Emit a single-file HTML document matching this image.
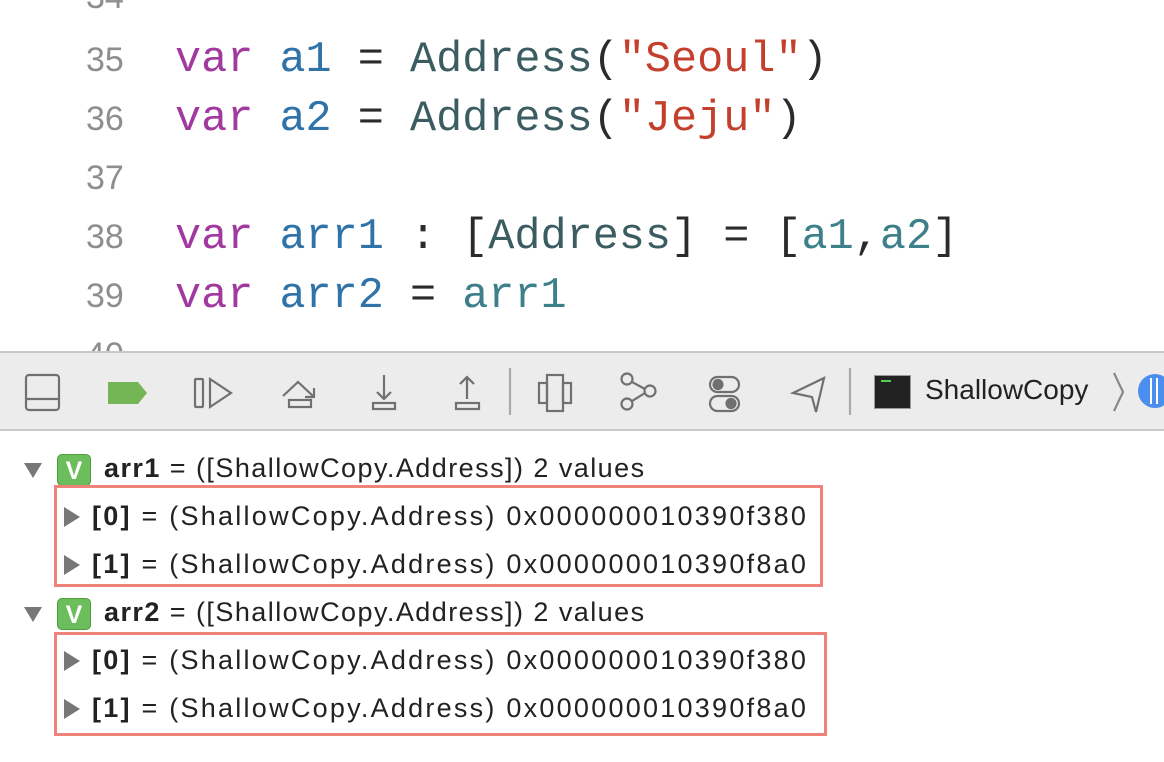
<!DOCTYPE html>
<html><head><style>
body{margin:0;width:1164px;height:762px;background:#fff;overflow:hidden;position:relative;font-family:"Liberation Sans",sans-serif}
.ln{position:absolute;left:86px;font-family:"Liberation Sans",sans-serif;font-size:34px;color:#8e8e8e}
.code{position:absolute;left:175px;font-family:"Liberation Mono",monospace;font-size:43.5px;color:#2b2b2b;white-space:pre}
.k{color:#a1399f}.v{color:#2f73a8}.t{color:#3b5c60}.s{color:#c4402d}.v2{color:#3e8089}
.tb{position:absolute;left:0;top:351px;width:1164px;height:76px;background:#ececec;border-top:2px solid #c8c8c8;border-bottom:2px solid #c8c8c8}
.row{position:absolute;font-size:27px;letter-spacing:1.45px;color:#222;white-space:pre}
.it{letter-spacing:2.25px}
.tri{position:absolute;width:0;height:0}
.box{position:absolute;border:3px solid #ef837c}
.V{position:absolute;left:57px;width:34px;height:32px;background:#6cbd5b;border:1px solid #4e9c40;border-radius:5px;color:#fff;font-weight:bold;font-size:25px;text-align:center;line-height:32px;box-sizing:border-box}
</style></head><body>
<div class="ln" style="top:-22px">34</div>
<div class="ln" style="top:41px">35</div>
<div class="code" style="top:36px"><span class="k">var</span> <span class="v">a1</span> = <span class="t">Address</span>(<span class="s">"Seoul"</span>)</div>
<div class="ln" style="top:100px">36</div>
<div class="code" style="top:95px"><span class="k">var</span> <span class="v">a2</span> = <span class="t">Address</span>(<span class="s">"Jeju"</span>)</div>
<div class="ln" style="top:159px">37</div>
<div class="ln" style="top:218px">38</div>
<div class="code" style="top:213px"><span class="k">var</span> <span class="v">arr1</span> : [<span class="t">Address</span>] = [<span class="v2">a1</span>,<span class="v2">a2</span>]</div>
<div class="ln" style="top:277px">39</div>
<div class="code" style="top:272px"><span class="k">var</span> <span class="v">arr2</span> = <span class="v2">arr1</span></div>
<div class="ln" style="top:336px">40</div>
<div class="tb">
<svg width="1164" height="76" style="position:absolute;left:0;top:0" fill="none" stroke="#707070" stroke-width="2.2">
<rect x="26" y="22" width="33" height="35" rx="3"/><line x1="26" y1="46" x2="59" y2="46"/>
<path d="M108 29h30l9 11-9 11h-30z" fill="#74b655" stroke="none"/>
<rect x="195" y="26" width="8" height="28" rx="1"/><path d="M210 26l21 14-21 14z"/>
<path d="M283 43l15-14 15 14M305 44h9v-9"/><rect x="289" y="47" width="22" height="7"/>
<path d="M384 22v24M377 39l7 7 7-7"/><rect x="373" y="50" width="22" height="6"/>
<path d="M467 24v22M460 31l7-7 7 7"/><rect x="456" y="50" width="23" height="6"/>
<line x1="510" y1="15" x2="510" y2="62" stroke="#aaa"/>
<rect x="547" y="22" width="16" height="36"/><rect x="539" y="30" width="8" height="20"/><rect x="563" y="30" width="8" height="20"/>
<circle cx="627" cy="26" r="5.5"/><circle cx="627" cy="51" r="5.5"/><circle cx="650" cy="38" r="5.5"/><path d="M632 29l13 7M632 48l13-8"/>
<rect x="710" y="24" width="29" height="15" rx="7.5"/><rect x="710" y="43" width="29" height="15" rx="7.5"/><circle cx="718" cy="31.5" r="4.5" fill="#707070"/><circle cx="731" cy="50.5" r="4.5" fill="#707070"/>
<path d="M793 40l31-15-8 34-4-15z"/>
<line x1="850" y1="15" x2="850" y2="62" stroke="#aaa"/>
<path d="M1114 20l9 19-9 19" stroke="#888"/>
</svg>
<div style="position:absolute;left:874px;top:22px;width:37px;height:34px;background:#222;border:1px solid #999;box-sizing:border-box"><div style="margin:4px 0 0 6px;width:10px;height:2px;background:#5c5"></div></div>
<div style="position:absolute;left:925px;top:21px;font-size:28px;color:#222">ShallowCopy</div>
<div style="position:absolute;left:1138px;top:21px;width:34px;height:34px;border-radius:50%;background:#4c8ef0"></div>
<div style="position:absolute;left:1150px;top:25px;width:2px;height:26px;background:#fff"></div><div style="position:absolute;left:1156px;top:25px;width:2px;height:26px;background:#fff"></div>
</div>

<div class="tri" style="left:24px;top:463px;border-left:9px solid transparent;border-right:9px solid transparent;border-top:15px solid #777"></div>
<div class="V" style="top:454px">V</div>
<div class="row" style="left:104px;top:453px"><b>arr1</b> = ([ShallowCopy.Address]) 2 values</div>
<div class="box" style="left:54px;top:485px;width:763px;height:96px"></div>
<div class="tri" style="left:64px;top:507px;border-top:10px solid transparent;border-bottom:10px solid transparent;border-left:16px solid #777"></div>
<div class="row it" style="left:92px;top:501px"><b>[0]</b> = (ShallowCopy.Address) 0x000000010390f380</div>
<div class="tri" style="left:64px;top:555px;border-top:10px solid transparent;border-bottom:10px solid transparent;border-left:16px solid #777"></div>
<div class="row it" style="left:92px;top:549px"><b>[1]</b> = (ShallowCopy.Address) 0x000000010390f8a0</div>

<div class="tri" style="left:24px;top:607px;border-left:9px solid transparent;border-right:9px solid transparent;border-top:15px solid #777"></div>
<div class="V" style="top:598px">V</div>
<div class="row" style="left:104px;top:597px"><b>arr2</b> = ([ShallowCopy.Address]) 2 values</div>
<div class="box" style="left:54px;top:632px;width:767px;height:98px"></div>
<div class="tri" style="left:64px;top:651px;border-top:10px solid transparent;border-bottom:10px solid transparent;border-left:16px solid #777"></div>
<div class="row it" style="left:92px;top:645px"><b>[0]</b> = (ShallowCopy.Address) 0x000000010390f380</div>
<div class="tri" style="left:64px;top:699px;border-top:10px solid transparent;border-bottom:10px solid transparent;border-left:16px solid #777"></div>
<div class="row it" style="left:92px;top:693px"><b>[1]</b> = (ShallowCopy.Address) 0x000000010390f8a0</div>
</body></html>
